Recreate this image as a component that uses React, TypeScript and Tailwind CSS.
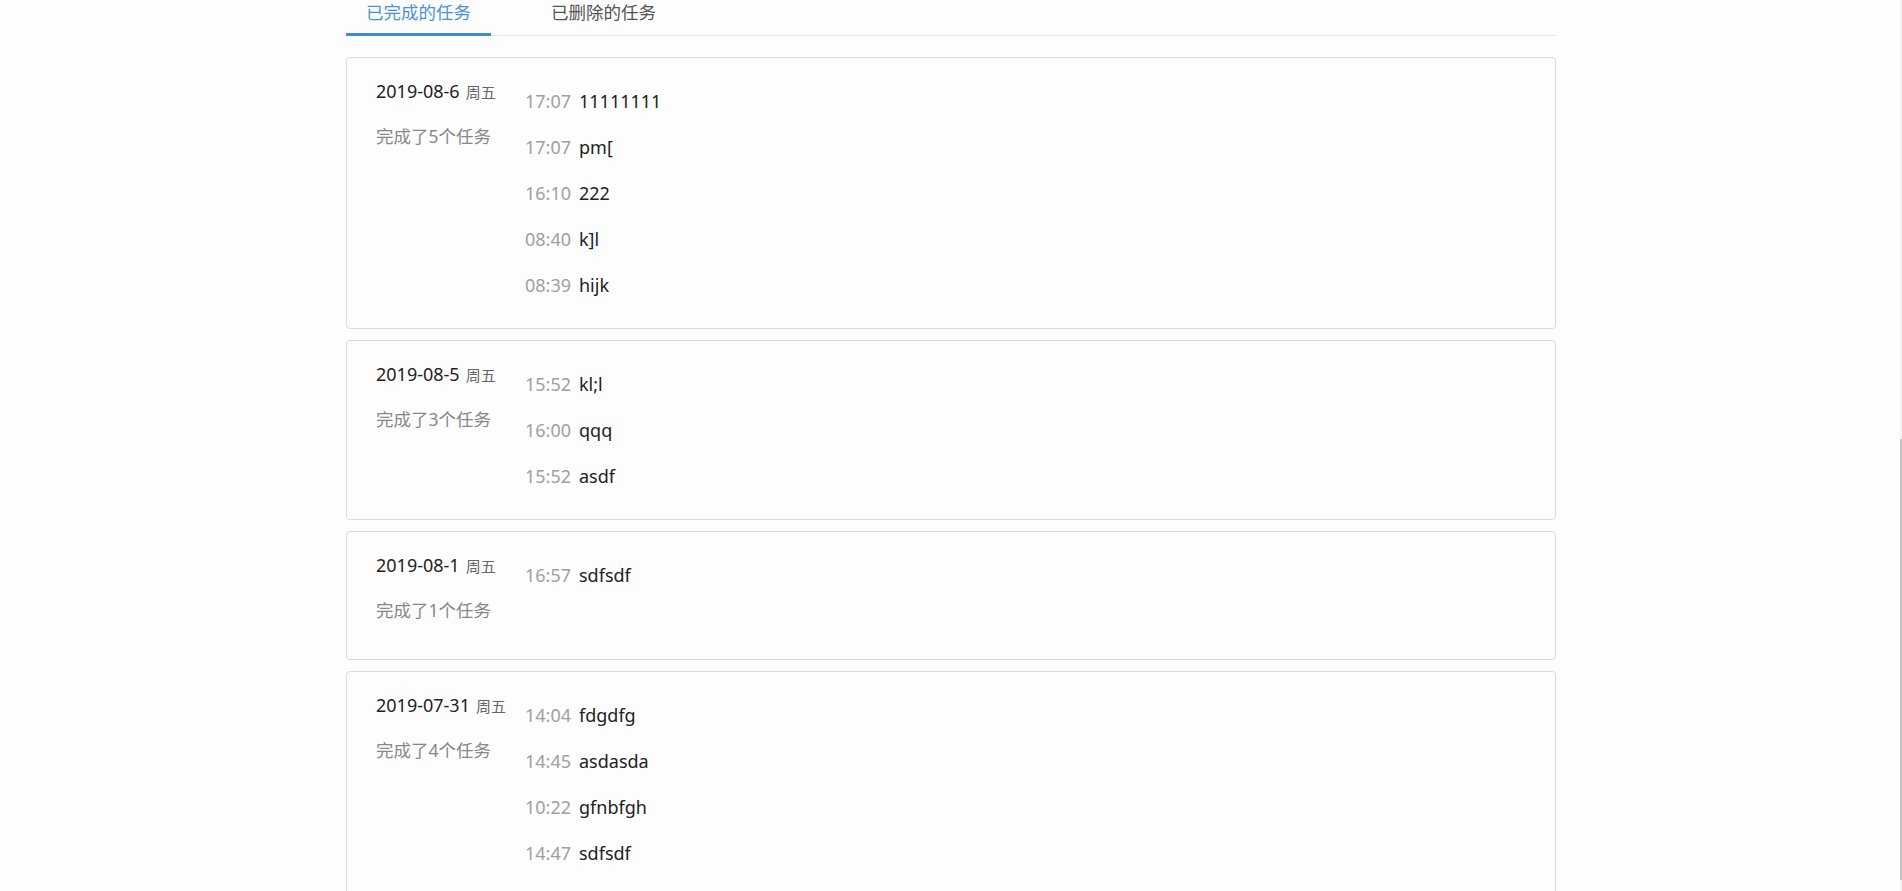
type Task = { time: string; title: string };
type Day = { date: string; week: string; tasks: Task[] };

const days: Day[] = [
  {
    date: "2019-08-6",
    week: "周五",
    tasks: [
      { time: "17:07", title: "11111111" },
      { time: "17:07", title: "pm[" },
      { time: "16:10", title: "222" },
      { time: "08:40", title: "k]l" },
      { time: "08:39", title: "hijk" },
    ],
  },
  {
    date: "2019-08-5",
    week: "周五",
    tasks: [
      { time: "15:52", title: "kl;l" },
      { time: "16:00", title: "qqq" },
      { time: "15:52", title: "asdf" },
    ],
  },
  {
    date: "2019-08-1",
    week: "周五",
    tasks: [{ time: "16:57", title: "sdfsdf" }],
  },
  {
    date: "2019-07-31",
    week: "周五",
    tasks: [
      { time: "14:04", title: "fdgdfg" },
      { time: "14:45", title: "asdasda" },
      { time: "10:22", title: "gfnbfgh" },
      { time: "14:47", title: "sdfsdf" },
    ],
  },
];

function DayCard({ day }: { day: Day }) {
  return (
    <div className="mb-[11px] flex rounded border border-[#dcdcdc] bg-[#fdfdfd] pl-[29px] pt-5 pb-5">
      <div className="w-[149px] shrink-0">
        <div className="leading-[26px] text-[18px] text-[#222]">
          {day.date}
          <span className="ml-1.5 text-[15px] text-[#666]">{day.week}</span>
        </div>
        <div className="mt-[18px] mb-[16px] leading-[26px] text-[17.5px] text-[#888]">
          完成了{day.tasks.length}个任务
        </div>
      </div>
      <ul>
        {day.tasks.map((t, i) => (
          <li key={i} className="flex h-[46px] items-center text-[18px]">
            <span className="w-[54px] text-[#a0a0a0]">{t.time}</span>
            <span className="text-[#222]">{t.title}</span>
          </li>
        ))}
      </ul>
    </div>
  );
}

export default function App() {
  return (
    <div
      className="relative h-screen overflow-hidden bg-[#fdfdfd]"
      style={{ fontFamily: '"Noto Sans", "Noto Sans CJK SC", sans-serif' }}
    >
      <div className="mx-auto w-[1210px]">
        <div className="flex gap-10 border-b border-[#e8e8e8]">
          <div className="-mb-px h-[36px] border-b-[3px] border-[#3c8dcf] px-5 text-[17.5px] leading-[24px] text-[#4a93d2]">
            已完成的任务
          </div>
          <div className="-mb-px h-[36px] px-5 text-[17.5px] leading-[24px] text-[#555]">
            已删除的任务
          </div>
        </div>

        <div className="mt-[21px]">
          {days.map((d) => (
            <DayCard key={d.date} day={d} />
          ))}
        </div>
      </div>

      {/* scrollbar */}
      <div className="fixed top-0 right-0 h-full w-[2px] bg-[#f2f2f2]" />
      <div className="fixed top-[439px] right-0 h-[441px] w-[2px] bg-[#c2c2c2]" />
    </div>
  );
}
